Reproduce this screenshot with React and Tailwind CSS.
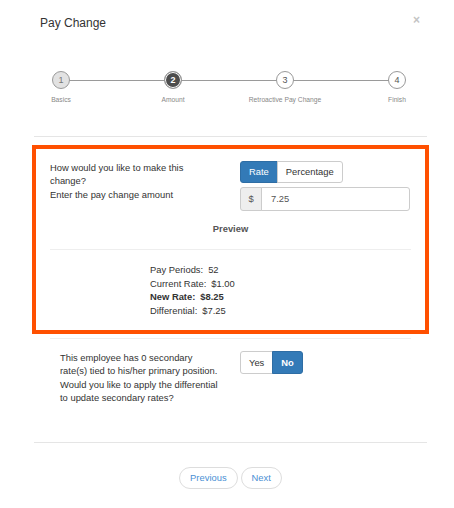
const steps = [
  { n: "1", label: "Basics", state: "done" },
  { n: "2", label: "Amount", state: "active" },
  { n: "3", label: "Retroactive Pay Change", state: "todo" },
  { n: "4", label: "Finish", state: "todo" },
];

const circleStyles = {
  done: "bg-[#e2e2e2] border-[#9a9a9a] text-[#777]",
  active:
    "bg-[#4d4d4d] border-[#999] text-white font-bold shadow-[inset_0_0_0_1px_#fff]",
  todo: "bg-white border-[#999] text-[#555]",
};

const Stepper = () => (
  <div className="relative ml-[5px] mt-[39px] grid w-[448px] grid-cols-4">
    <div className="absolute left-[56px] right-[56px] top-[9px] h-px bg-[#9a9a9a]"></div>
    {steps.map((s) => (
      <div key={s.n} className="relative flex flex-col items-center">
        <div
          className={`flex h-[18px] w-[18px] items-center justify-center rounded-full border-[1.5px] text-[9px] leading-none ${circleStyles[s.state]}`}
        >
          {s.n}
        </div>
        <div className="mt-[6px] text-[6.7px] leading-[10px] text-[#888]">
          {s.label}
        </div>
      </div>
    ))}
  </div>
);

const PreviewRow = ({ label, value, bold }) => (
  <div className={bold ? "font-bold" : ""}>
    <span>{label}</span>
    <span className="ml-[5px]">{value}</span>
  </div>
);

export default function App() {
  return (
    <div
      className="h-[508px] w-[454px] bg-white text-[#333]"
      style={{ fontFamily: '"Liberation Sans", Arial, sans-serif' }}
    >
      {/* header */}
      <div className="flex items-start justify-between pl-[40px] pr-[34px] pt-[15px]">
        <h4 className="text-[12px] leading-[17px]">Pay Change</h4>
        <span className="text-[12px] font-bold leading-[10px] text-[#c4c4c4]">
          ×
        </span>
      </div>

      <Stepper />

      <div className="ml-[34px] w-[393px]">
        <div className="mt-[31px] border-t border-[#e5e5e5]"></div>

        {/* highlighted block */}
        <div className="-ml-[2px] mt-[8px] w-[397px] border-[4px] border-[#ff5000] px-[14px] pb-[13px] pt-[12px] text-[9.4px] leading-[13.4px]">
          <div className="grid grid-cols-[190px_1fr]">
            <div>
              How would you like to make this
              <br />
              change?
              <br />
              Enter the pay change amount
            </div>
            <div>
              <div className="flex">
                <button className="h-[22px] rounded-l-[3px] border border-[#2e6da4] bg-[#337ab7] px-[8px] text-white">
                  Rate
                </button>
                <button className="-ml-px h-[22px] rounded-r-[3px] border border-[#ccc] bg-white px-[8px] text-[#333]">
                  Percentage
                </button>
              </div>
              <div className="mt-[4px] flex h-[24px] w-[170px]">
                <span className="flex w-[22px] items-center justify-center rounded-l-[3px] border border-[#ccc] bg-[#eee] text-[#555]">
                  $
                </span>
                <div className="-ml-px flex flex-1 items-center rounded-r-[3px] border border-[#ccc] pl-[9px] text-[#555]">
                  7.25
                </div>
              </div>
            </div>
          </div>

          <div className="mt-[11px] text-center font-bold text-[#555]">
            Preview
          </div>
          <div className="mt-[14px] border-t border-[#eee]"></div>

          <div className="mt-[13px] pl-[100px]">
            <PreviewRow label="Pay Periods:" value="52" />
            <PreviewRow label="Current Rate:" value="$1.00" />
            <PreviewRow label="New Rate:" value="$8.25" bold />
            <PreviewRow label="Differential:" value="$7.25" />
          </div>
        </div>

        <div className="mx-[16px] mt-[4px] border-t border-[#eee]"></div>

        {/* secondary rates */}
        <div className="mt-[12px] flex text-[9.4px] leading-[13.4px]">
          <div className="w-[206px] whitespace-nowrap pl-[26px]">
            This employee has 0 secondary
            <br />
            rate(s) tied to his/her primary position.
            <br />
            Would you like to apply the differential
            <br />
            to update secondary rates?
          </div>
          <div className="flex h-[23px]">
            <button className="rounded-l-[3px] border border-[#ccc] bg-white px-[8px] text-[#333]">
              Yes
            </button>
            <button className="-ml-px rounded-r-[3px] border border-[#2e6da4] bg-[#337ab7] px-[8px] font-bold text-white">
              No
            </button>
          </div>
        </div>

        <div className="mt-[37px] border-t border-[#e5e5e5]"></div>

        {/* footer */}
        <div className="mt-[24px] flex justify-center gap-[3px] text-[9.4px]">
          <button className="h-[22px] rounded-full border border-[#ddd] bg-white px-[10px] text-[#4a8fd4]">
            Previous
          </button>
          <button className="h-[22px] rounded-full border border-[#ddd] bg-white px-[10px] text-[#4a8fd4]">
            Next
          </button>
        </div>
      </div>
    </div>
  );
}
